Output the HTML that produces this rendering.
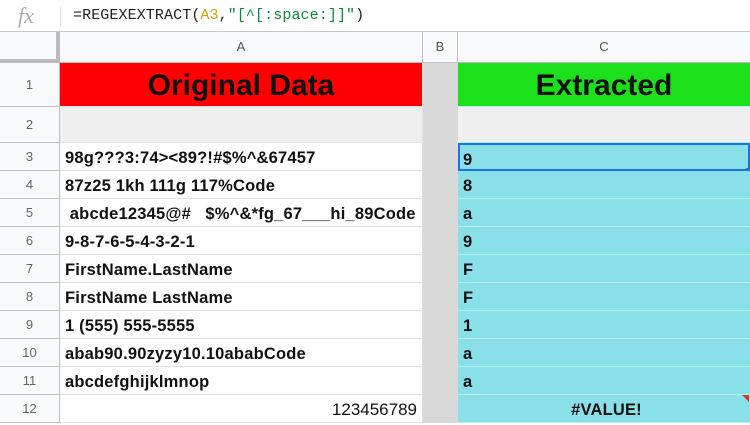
<!DOCTYPE html>
<html><head><meta charset="utf-8"><style>
*{margin:0;padding:0;box-sizing:border-box}
body{width:750px;height:423px;overflow:hidden;background:#fff;font-family:"Liberation Sans",Arial,sans-serif;position:relative}
.fb{position:absolute;left:0;top:0;width:750px;height:32px;background:#fff;border-bottom:1px solid #c8c8c8}
.fx{position:absolute;left:18px;top:3px;font:italic 22px "Liberation Serif",serif;color:#aaa}
.sep{position:absolute;left:60px;top:6px;width:1px;height:20px;background:#ddd}
.f{position:absolute;left:73px;top:7px;font:15px "Liberation Mono",monospace;color:#222;letter-spacing:0.1px}
.hdr{position:absolute;top:32px;height:31px;background:#f8f9fa;border-right:1px solid #c0c0c0;border-bottom:1px solid #c0c0c0;text-align:center;line-height:30px;font-size:13px;color:#555}
.rh{position:absolute;left:0;width:60px;background:#f8f9fa;border-bottom:1px solid #c0c0c0;border-right:1px solid #c0c0c0;text-align:center;font-size:13px;color:#666}
.a,.c{position:absolute;border-bottom:1px solid #e0e0e0;font-weight:bold;font-size:16.5px;color:#111;padding-left:5px;white-space:nowrap;letter-spacing:0.2px}
.a{left:60px;width:363px;background:#fff;border-right:1px solid #e0e0e0}
.c{left:458px;width:292px;background:#8ae0e8;border-bottom:1px solid #b8eef2}
.b{position:absolute;left:423px;top:63px;width:35px;height:360px;background:#d9d9d9}
</style></head><body>
<div class="fb"><span class="fx">fx</span><div class="sep"></div>
<div class="f">=REGEXEXTRACT(<span style="color:#d89b00">A3</span>,<span style="color:#0a8a3a">"[^[:space:]]"</span>)</div></div>
<div class="hdr" style="left:0;width:60px;border-right:4px solid #bbb;border-bottom:4px solid #bbb"></div>
<div class="hdr" style="left:60px;width:363px">A</div>
<div class="hdr" style="left:423px;width:35px">B</div>
<div class="hdr" style="left:458px;width:292px;border-right:none">C</div>
<div class="b"></div>

<div class="rh" style="top:63px;height:44px;line-height:44px">1</div>
<div class="a" style="top:63px;height:44px;background:#f00;text-align:center;font-size:30px;line-height:46px;padding:0;letter-spacing:0">Original Data</div>
<div class="c" style="top:63px;height:44px;background:#1de01d;text-align:center;font-size:30px;line-height:46px;padding:0;letter-spacing:0">Extracted</div>
<div class="rh" style="top:107px;height:36px;line-height:36px">2</div>
<div class="a" style="top:107px;height:36px;background:#efefef"></div>
<div class="c" style="top:107px;height:36px;background:#efefef"></div>

<div class="rh" style="top:143px;height:28px;line-height:28px">3</div>
<div class="a" style="top:143px;height:28px;line-height:30px">98g???3:74&gt;&lt;89?!#$%^&amp;67457</div>
<div class="c" style="top:143px;height:28px;line-height:30px;border:2px solid #1a73e8;padding-left:3px">9</div>
<div style="position:absolute;left:746px;top:168px;width:5px;height:5px;background:#1a73e8"></div>
<div class="rh" style="top:171px;height:28px;line-height:28px">4</div>
<div class="a" style="top:171px;height:28px;line-height:30px">87z25 1kh 111g 117%Code</div>
<div class="c" style="top:171px;height:28px;line-height:30px">8</div>
<div class="rh" style="top:199px;height:28px;line-height:28px">5</div>
<div class="a" style="top:199px;height:28px;line-height:30px;white-space:pre"> abcde12345@#   $%^&amp;*fg_67___hi_89Code</div>
<div class="c" style="top:199px;height:28px;line-height:30px">a</div>
<div class="rh" style="top:227px;height:28px;line-height:28px">6</div>
<div class="a" style="top:227px;height:28px;line-height:30px">9-8-7-6-5-4-3-2-1</div>
<div class="c" style="top:227px;height:28px;line-height:30px">9</div>
<div class="rh" style="top:255px;height:28px;line-height:28px">7</div>
<div class="a" style="top:255px;height:28px;line-height:30px">FirstName.LastName</div>
<div class="c" style="top:255px;height:28px;line-height:30px">F</div>
<div class="rh" style="top:283px;height:28px;line-height:28px">8</div>
<div class="a" style="top:283px;height:28px;line-height:30px">FirstName LastName</div>
<div class="c" style="top:283px;height:28px;line-height:30px">F</div>
<div class="rh" style="top:311px;height:28px;line-height:28px">9</div>
<div class="a" style="top:311px;height:28px;line-height:30px">1 (555) 555-5555</div>
<div class="c" style="top:311px;height:28px;line-height:30px">1</div>
<div class="rh" style="top:339px;height:28px;line-height:28px">10</div>
<div class="a" style="top:339px;height:28px;line-height:30px">abab90.90zyzy10.10ababCode</div>
<div class="c" style="top:339px;height:28px;line-height:30px">a</div>
<div class="rh" style="top:367px;height:28px;line-height:28px">11</div>
<div class="a" style="top:367px;height:28px;line-height:30px">abcdefghijklmnop</div>
<div class="c" style="top:367px;height:28px;line-height:30px">a</div>
<div class="rh" style="top:395px;height:28px;line-height:28px">12</div>
<div class="a" style="top:395px;height:28px;line-height:30px;text-align:right;padding-right:5px;font-weight:normal;font-size:17px;letter-spacing:0">123456789</div>
<div class="c" style="top:395px;height:28px;line-height:30px;text-align:center">#VALUE!</div>
<div style="position:absolute;left:742px;top:395px;width:0;height:0;border-left:7px solid transparent;border-top:7px solid #d9342b"></div>
</body></html>
